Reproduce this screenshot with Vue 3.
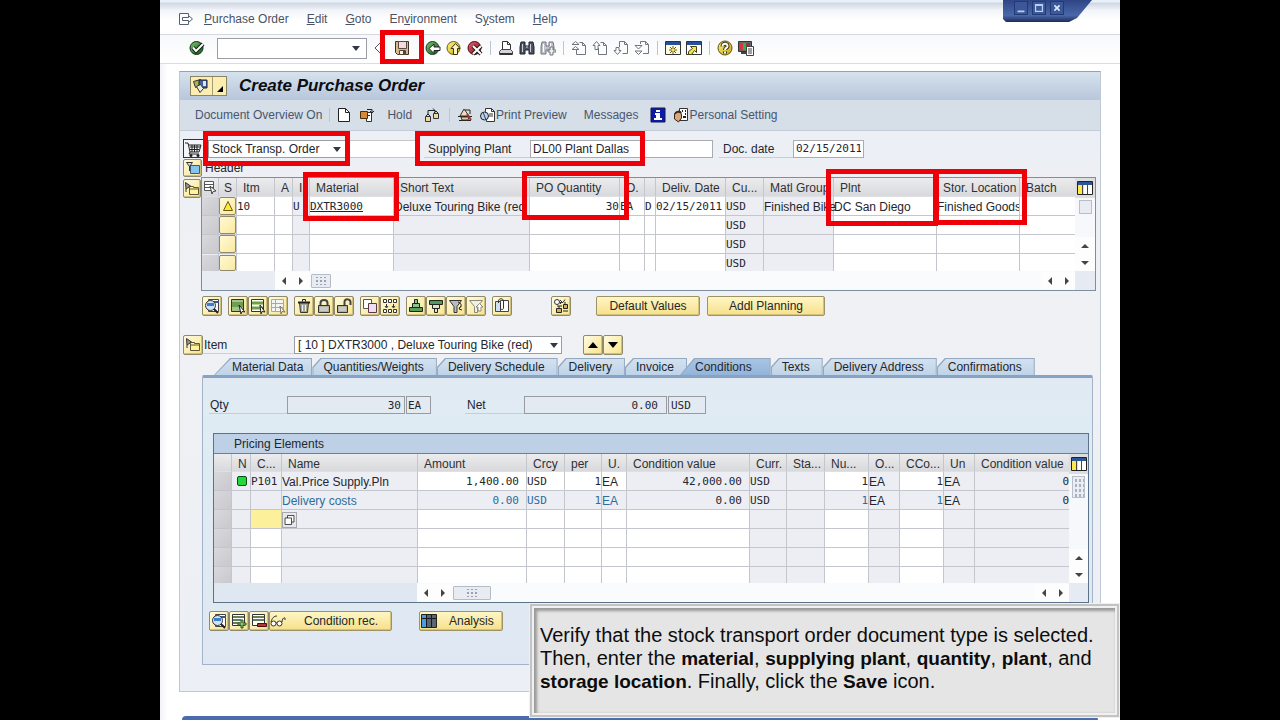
<script setup>
import { ref } from 'vue'

const menus = [
  ['', 'P', 'urchase Order'],
  ['', 'E', 'dit'],
  ['', 'G', 'oto'],
  ['En', 'v', 'ironment'],
  ['S', 'y', 'stem'],
  ['', 'H', 'elp'],
]

const toolbarGroups = [
  [['back', 'Back'], ['exit', 'Exit'], ['cancel', 'Cancel']],
  [['print', 'Print'], ['find', 'Find'], ['findnext', 'Find next']],
  [['first', 'First page'], ['prev', 'Previous page'], ['next', 'Next page'], ['last', 'Last page']],
  [['session', 'New session'], ['shortcut', 'Create shortcut']],
  [['help', 'Help'], ['layout', 'Customize layout']],
]

const itemColumns = [
  { label: '', w: 17, kind: 'sel' },
  { label: 'S', w: 18, kind: 'status' },
  { label: 'Itm', w: 38, kind: 'edit', mono: true },
  { label: 'A', w: 18, kind: 'edit' },
  { label: 'I', w: 17, kind: 'read', mono: true },
  { label: 'Material', w: 84, kind: 'edit', mono: true, link: true },
  { label: 'Short Text', w: 136, kind: 'read' },
  { label: 'PO Quantity', w: 90, kind: 'edit', mono: true, right: true },
  { label: 'O.', w: 25, kind: 'edit', mono: true },
  { label: '', w: 11, kind: 'edit', mono: true },
  { label: 'Deliv. Date', w: 70, kind: 'edit', mono: true },
  { label: 'Cu...', w: 38, kind: 'read', mono: true },
  { label: 'Matl Group', w: 70, kind: 'read' },
  { label: 'Plnt', w: 103, kind: 'edit' },
  { label: 'Stor. Location', w: 83, kind: 'edit' },
  { label: 'Batch', w: 0, kind: 'edit' },
]

const blankItem = ['', '', '', '', '', '', '', '', '', '', '', 'USD', '', '', '', '']
const itemRows = ref([
  ['', '△', '10', '', 'U', 'DXTR3000', 'Deluxe Touring Bike (red', '30', 'EA', 'D', '02/15/2011', 'USD', 'Finished Bike', 'DC San Diego', 'Finished Goods', ''],
  [...blankItem],
  [...blankItem],
  [...blankItem],
])

const itemTools = [
  [['detail', 'Details']],
  [['selall', 'Select all'], ['selblock', 'Select block'], ['desel', 'Deselect all']],
  [['trash', 'Delete'], ['lock', 'Lock'], ['unlock', 'Unlock']],
  [['copy', 'Copy'], ['rows', 'Duplicate']],
  [['sortup', 'Sort ascending'], ['sortdown', 'Sort descending'], ['filter', 'Filter'], ['unfilter', 'Remove filter']],
  [['clip', 'Attachments']],
]

const tabs = ['Material Data', 'Quantities/Weights', 'Delivery Schedule', 'Delivery', 'Invoice', 'Conditions', 'Texts', 'Delivery Address', 'Confirmations']
const activeTab = ref('Conditions')

const priceColumns = [
  { label: '', w: 18, kind: 'sel' },
  { label: 'N', w: 19, kind: 'light' },
  { label: 'C...', w: 31, kind: 'ctype', mono: true },
  { label: 'Name', w: 136, kind: 'name' },
  { label: 'Amount', w: 109, kind: 'edit', mono: true, right: true, pad: true },
  { label: 'Crcy', w: 38, kind: 'edit', mono: true },
  { label: 'per', w: 37, kind: 'edit', mono: true, right: true },
  { label: 'U.', w: 25, kind: 'edit' },
  { label: 'Condition value', w: 123, kind: 'value', mono: true, right: true, pad: true },
  { label: 'Curr.', w: 37, kind: 'read', mono: true },
  { label: 'Sta...', w: 38, kind: 'read' },
  { label: 'Nu...', w: 44, kind: 'edit', mono: true, right: true },
  { label: 'O...', w: 31, kind: 'read' },
  { label: 'CCo...', w: 44, kind: 'edit', mono: true, right: true },
  { label: 'Un', w: 31, kind: 'read' },
  { label: 'Condition value', w: 0, kind: 'read', mono: true, right: true },
]

const priceRows = ref([
  ['', 'on', 'P101', 'Val.Price Supply.Pln', '1,400.00', 'USD', '1', 'EA', '42,000.00', 'USD', '', '1', 'EA', '1', 'EA', '0'],
  ['', '', '', 'Delivery costs', '0.00', 'USD', '1', 'EA', '0.00', 'USD', '', '1', 'EA', '1', 'EA', '0'],
  Array(16).fill(''),
  Array(16).fill(''),
  Array(16).fill(''),
  Array(16).fill(''),
])

function isInput(col, rowIndex) {
  if (col.kind === 'value' || col.kind === 'ctype') return rowIndex > 1
  return col.kind === 'edit' && rowIndex !== 1
}

const colStyle = (c) => (c.w ? { width: c.w + 'px' } : {})
</script>

<template>
  <svg class="defs" aria-hidden="true">
    <defs>
      <linearGradient id="g-green" x1="0" y1="0" x2="1" y2="1"><stop offset="0" stop-color="#7cc46c" /><stop offset="1" stop-color="#14581c" /></linearGradient>
      <linearGradient id="g-yel" x1="0" y1="0" x2="1" y2="1"><stop offset="0" stop-color="#fff680" /><stop offset="1" stop-color="#c9a514" /></linearGradient>
      <linearGradient id="g-red" x1="0" y1="0" x2="1" y2="1"><stop offset="0" stop-color="#e8606c" /><stop offset="1" stop-color="#8a0a1c" /></linearGradient>
    </defs>
    <symbol id="i-menu" viewBox="0 0 16 16"><path d="M10.500 4.500V2.500H1.500v11h9v-2M4.500 6.500v3h6v2l4-3.500-4-3.500v2z" fill="#fff" stroke="#565f70" /></symbol>
    <symbol id="i-ok" viewBox="0 0 16 16"><circle cx="7.500" cy="8" r="6.500" fill="url(#g-green)" stroke="#0c3012" /><path d="M4 7.500l3 3.500 7-7" fill="none" stroke="#0c2010" stroke-width="4" /><path d="M4 7.500l3 3.500 7-7" fill="none" stroke="#fff" stroke-width="2" /></symbol>
    <symbol id="i-save" viewBox="0 0 16 16"><path d="M1.500 1.500h13v13h-11l-2-2z" fill="#d9b98c" stroke="#3c3029" /><path d="M4.500 1.500h8v7h-8z" fill="#f3dcdc" stroke="#5c4a40" /><path d="M5.500 10.500h6v4h-6z" fill="#f8f4e8" stroke="#54463b" /><path d="M9 11h2v3H9z" fill="#54463b" /></symbol>
    <symbol id="i-back" viewBox="0 0 16 16"><circle cx="7.500" cy="8" r="6.500" fill="url(#g-green)" stroke="#123d18" /><path d="M4 8.500l5-4.500v3h6v3.500H9v3z" fill="#fff" stroke="#222" /></symbol>
    <symbol id="i-exit" viewBox="0 0 16 16"><circle cx="7.500" cy="8" r="6.500" fill="url(#g-yel)" stroke="#6c5b14" /><path d="M9.500 3.500l4.500 5h-2.500v6h-4v-6H5z" fill="#fff8c0" stroke="#3a3212" /></symbol>
    <symbol id="i-cancel" viewBox="0 0 16 16"><circle cx="7.500" cy="8" r="6.500" fill="url(#g-red)" stroke="#4c0810" /><path d="M6 6l8 8M14 6l-8 8" stroke="#222" stroke-width="4" /><path d="M6 6l8 8M14 6l-8 8" stroke="#fff" stroke-width="2" /></symbol>
    <symbol id="i-print" viewBox="0 0 16 16"><path d="M4.500 9.500v-8h5l3 3v5" fill="#fff" stroke="#333" /><path d="M9.500 1.500v3h3" fill="none" stroke="#333" /><path d="M1.500 14.500v-3l2-2h9l2 2v3z" fill="#d5d5dc" stroke="#444" /><path d="M2 14h12" stroke="#333" stroke-width="2" /></symbol>
    <symbol id="i-find" viewBox="0 0 16 16"><path d="M2 2h4v4h4V2h4l1 5v7h-5v-4H6v4H1V7z" fill="#4c525e" stroke="#20242c" /><path d="M3.500 4v8M11.500 4v8M7 7h2" stroke="#c8d0e0" stroke-width="1" /></symbol>
    <symbol id="i-findnext" viewBox="0 0 16 16"><path d="M2 2h4v4h3V2h4l1 5v3H6v4H1V7z" fill="#bfc3ca" stroke="#70757e" /><path d="M3.500 4v8M10.500 3v5" stroke="#fff" /><path d="M10 7h3v3h3v2h-3v3h-3v-3H8v-2h2z" fill="#eee" stroke="#70757e" /></symbol>
    <symbol id="i-first" viewBox="0 0 16 16"><path d="M5.500 9v5.500h9v-9l-3-3h-3M11.500 2.500v3h3" fill="none" stroke="#70757e" /><path d="M1 4.500l3.500-3 3.500 3zM1 9.500l3.500-3 3.500 3z" fill="#fff" stroke="#70757e" /></symbol>
    <symbol id="i-prev" viewBox="0 0 16 16"><path d="M6.500 8v6.500h8v-9l-3-3h-3M11.500 2.500v3h3" fill="none" stroke="#70757e" /><path d="M1 5.500l3.500-4 3.500 4H6v4H3v-4z" fill="#fff" stroke="#70757e" /></symbol>
    <symbol id="i-next" viewBox="0 0 16 16"><path d="M6.500 7V1.500h5l3 3v9h-5M11.500 1.500v3h3" fill="none" stroke="#70757e" /><path d="M1 10.500l3.500 4 3.500-4H6v-3H3v3z" fill="#fff" stroke="#70757e" /></symbol>
    <symbol id="i-last" viewBox="0 0 16 16"><path d="M6.500 4V1.500h5l3 3v9H9M11.500 1.500v3h3" fill="none" stroke="#70757e" /><path d="M1 5.500h7L4.500 9zM1 11h7l-3.500 3.500z" fill="#fff" stroke="#70757e" /></symbol>
    <symbol id="i-session" viewBox="0 0 16 16"><path d="M.5 1.500h15v13H.5z" fill="#fffbe0" stroke="#333" /><path d="M1 2h14v3H1z" fill="#28509a" /><path d="M8 6v8M4 10h8M5 7l6 6M11 7l-6 6" stroke="#6b5a10" stroke-width="1" /><path d="M7 9h2v2H7z" fill="#ffe838" /></symbol>
    <symbol id="i-shortcut" viewBox="0 0 16 16"><path d="M.5 1.500h15v13H.5z" fill="#fff" stroke="#333" /><path d="M1 2h14v3H1z" fill="#28509a" /><path d="M2.500 14.500v-3l4-3-2-2h6v6l-2-2-3 4z" fill="#f4e648" stroke="#4a4310" /></symbol>
    <symbol id="i-help" viewBox="0 0 16 16"><circle cx="8" cy="8" r="7" fill="url(#g-yel)" stroke="#5e5210" /><path d="M5.500 6.500c0-4 5.500-3.500 5 0C10 8 8 8 8 10M8 11.500v2" fill="none" stroke="#3a3208" stroke-width="4" /><path d="M5.500 6.500c0-4 5.500-3.500 5 0C10 8 8 8 8 10M8 11.500v2" fill="none" stroke="#fff" stroke-width="2" /></symbol>
    <symbol id="i-layout" viewBox="0 0 16 16"><path d="M.5 1.500h13v10H.5z" fill="#666" stroke="#333" /><path d="M2 3h3v7H2z" fill="#d8323c" /><path d="M5 3h3v7H5z" fill="#36b04c" /><path d="M8 3h4v7H8z" fill="#9a3048" /><path d="M3 13h6" stroke="#444" stroke-width="2" /><path d="M8.500 6.500h7v9h-7z" fill="#fff" stroke="#444" /><path d="M10 9h4M10 11h4M10 13h4" stroke="#444" /></symbol>
    <symbol id="i-po" viewBox="0 0 16 16"><path d="M1.500 3.500l7-2 2 5-7 3z" fill="#a8b848" stroke="#333" /><path d="M7 2h8v8H7z" fill="#3c64b4" stroke="#222" /><path d="M11 3h3v5h-3z" fill="#dce6f8" /><path d="M4.500 8.500l3.500 6 3.500-4-3-4z" fill="#f3efdc" stroke="#333" /></symbol>
    <symbol id="i-doc" viewBox="0 0 16 16"><path d="M2.500 1.500h7l4 4v9h-11z" fill="#fff" stroke="#222" /><path d="M9.500 1.500v4h4" fill="none" stroke="#222" /></symbol>
    <symbol id="i-other" viewBox="0 0 16 16"><path d="M7.500 5.500h5v9h-5z" fill="#fff" stroke="#333" /><path d="M1.500 4.500h7v7h-7z" fill="#d98a34" stroke="#4c2e0c" /><path d="M8 2.500h5v3M11 4l2 2 2-2M9 8.500h2" fill="none" stroke="#222" /></symbol>
    <symbol id="i-check" viewBox="0 0 16 16"><path d="M1.500 9.500h5v5h-5zM9.500 6.500h5v5h-5z" fill="#f0d9a0" stroke="#333" /><path d="M4 8V3.500h7v2M9 1.500l2 2M2 9l2-2 2 2M10 6l2-2 2 2" fill="none" stroke="#222" /></symbol>
    <symbol id="i-balance" viewBox="0 0 16 16"><path d="M3 9l4-7 5 7z" fill="#f4d9bc" stroke="#333" /><path d="M1 9.500h14M2 13.500h12M8 3h5v4" fill="none" stroke="#222" /><path d="M4 10h8l-1 3H5z" fill="#ecc8a4" stroke="#333" /><path d="M10 7l4 6" stroke="#a43434" stroke-width="2" /></symbol>
    <symbol id="i-preview" viewBox="0 0 16 16"><path d="M5.500 4.500v-3h6l3 3v10h-8z" fill="#fff" stroke="#333" /><path d="M11.500 1.500v3h3M9 7h4M9 9h4" fill="none" stroke="#333" /><circle cx="4.500" cy="9" r="4" fill="#b8d0ee" stroke="#222" /><path d="M3 5l3 8" stroke="#345" /></symbol>
    <symbol id="i-info" viewBox="0 0 16 16"><path d="M1 1h14v14H1z" fill="#0c1ca8" stroke="#111a50" /><path d="M6 3h4v2H6zM5 6h5v5h2v2H4v-2h2V8H5z" fill="#fff" /></symbol>
    <symbol id="i-person" viewBox="0 0 16 16"><path d="M6.500 1.500h8v12h-8z" fill="#fff" stroke="#333" /><path d="M9 4h1M12 4h1M12 7h1M10 10h3" stroke="#222" stroke-width="2" /><path d="M1.500 8c0-4 7-4 7 0v3l-3 4-4-3z" fill="#d9a878" stroke="#382414" /><path d="M2 7c1-3 5-3 6-1" stroke="#3c2818" stroke-width="2" fill="none" /></symbol>
    <symbol id="i-cart" viewBox="0 0 18 16"><path d="M1 2h3l2 9h9l2-7H4.500M6 6h10M6 8.500h9M8 4v7M10.500 4v7M13 4v7" fill="none" stroke="#222" /><path d="M6 11l-1 2h10" fill="none" stroke="#222" /><circle cx="7" cy="14.500" r="1.500" fill="#222" /><circle cx="14" cy="14.500" r="1.500" fill="#222" /></symbol>
    <symbol id="i-expand" viewBox="0 0 16 16"><path d="M5.500 5.500h9v8h-9z" fill="#84c4ee" stroke="#34607c" /><path d="M1.500 2.500h6l-3 4zM4.500 6v5" fill="#ddd" stroke="#333" /></symbol>
    <symbol id="i-folder" viewBox="0 0 16 16"><path d="M5.500 6.500v-1h4v1h5v7h-9z" fill="#fff2a0" stroke="#5f5832" /><path d="M5 8h9" stroke="#5f5832" /><path d="M1.500 1.500l5 3.500-4.500 3zM2 8v3" fill="#999" stroke="#333" /></symbol>
    <symbol id="i-selcol" viewBox="0 0 16 16"><path d="M2.500 2.500h9v9h-9zM2.500 5.500h9M2.500 8.500h9" fill="#fff" stroke="#555" /><path d="M8 7l6 5-3 .500-1 2.500z" fill="#fff" stroke="#444" /></symbol>
    <symbol id="i-config" viewBox="0 0 16 16"><path d="M.5 1.500h15v13H.5z" fill="#fff" stroke="#222" /><path d="M1 2h14v3H1z" fill="#2c5694" /><path d="M1 5h6v9H1z" fill="#ffe84c" /><path d="M5.500 5v9M10.500 5v9" stroke="#444" /></symbol>
    <symbol id="i-detail" viewBox="0 0 16 16"><path d="M4.500 1.500h10v12h-10z" fill="#fff" stroke="#444" /><path d="M5 4h10" stroke="#335a96" stroke-width="2" /><circle cx="6.500" cy="7.500" r="5" fill="#cfe4f8" stroke="#333" /><path d="M3 5h7v3H3z" fill="#3c7fd0" /><path d="M10 11l4 4" stroke="#222" stroke-width="2" /></symbol>
    <symbol id="i-selall" viewBox="0 0 16 16"><path d="M1.500 1.500h12v12h-12z" fill="#6f9e50" stroke="#333" /><path d="M2 3h11M2 10h11M2 12h11" stroke="#dce8cc" /><path d="M9 7l6 7-3-.500L11 16z" fill="#fff" stroke="#222" /></symbol>
    <symbol id="i-selblock" viewBox="0 0 16 16"><path d="M1.500 1.500h12v12h-12z" fill="#fff" stroke="#333" /><path d="M2 5h11M2 10h11" stroke="#6fa044" stroke-width="3" /><path d="M10 7l5 7-3-.500L11 16z" fill="#fff" stroke="#222" /></symbol>
    <symbol id="i-desel" viewBox="0 0 16 16"><path d="M1.500 1.500h12v12h-12zM2 5.500h11M2 9.500h11M5.500 2v11" fill="#f4f4f0" stroke="#aaa99a" /><path d="M10 8l5 6-3-.500L11 16z" fill="#fff" stroke="#77766c" /></symbol>
    <symbol id="i-trash" viewBox="0 0 16 16"><path d="M3.500 4.500h9l-1 10h-7z" fill="#a8a898" stroke="#333" /><path d="M2 4.500h12" stroke="#222" stroke-width="2" /><path d="M6.500 3.500v-2h3v2" fill="none" stroke="#222" /><path d="M6.500 7v6M9.500 7v6" stroke="#eee" /></symbol>
    <symbol id="i-lock" viewBox="0 0 16 16"><path d="M4.500 8V5c0-4 7-4 7 0v3" fill="none" stroke="#444" stroke-width="2" /><path d="M2.500 7.500h11v7h-11z" fill="#b0b0a4" stroke="#333" /><path d="M4 10h8M4 12h8" stroke="#e4e4dc" /></symbol>
    <symbol id="i-unlock" viewBox="0 0 16 16"><path d="M8.500 8V4c0-4 6-3 6 0v3" fill="none" stroke="#444" stroke-width="2" /><path d="M1.500 7.500h10v7h-10z" fill="#b0b0a4" stroke="#333" /><path d="M3 10h7M3 12h7" stroke="#e4e4dc" /></symbol>
    <symbol id="i-copy" viewBox="0 0 16 16"><path d="M1.500 1.500h8v9h-8z" fill="#fff" stroke="#555" /><path d="M6.500 5.500h8v9h-8z" fill="#eedff0" stroke="#5c3448" /></symbol>
    <symbol id="i-rows" viewBox="0 0 16 16"><path d="M1.500 1.500h3v3h-3zM6.500 1.500h3v3h-3zM11.500 1.500h3v3h-3zM1.500 11.500h3v3h-3zM6.500 11.500h3v3h-3zM11.500 11.500h3v3h-3z" fill="#fff" stroke="#333" /><path d="M4.500 6v3M3 8l1.500 2L6 8M11.500 6v3M10 8l1.500 2L13 8" fill="none" stroke="#333" /></symbol>
    <symbol id="i-sortup" viewBox="0 0 16 16"><path d="M6.500 1.500h3v4h-3zM4.500 5.500h7v4h-7z" fill="#8cc48c" stroke="#222" /><path d="M1.500 9.500h13v4h-13z" fill="#5c9c5c" stroke="#222" /></symbol>
    <symbol id="i-sortdown" viewBox="0 0 16 16"><path d="M1.500 2.500h13v4h-13z" fill="#4c9c54" stroke="#222" /><path d="M4.500 6.500h7v4h-7zM6.500 10.500h3v4h-3z" fill="#d8e8c8" stroke="#222" /></symbol>
    <symbol id="i-filter" viewBox="0 0 16 16"><path d="M1.500 2.500h12l-4.500 6v6h-3v-6z" fill="#b8bcc0" stroke="#333" /><path d="M10 4c4 1 4 5 1 6M13 8l-2 3 3 1" fill="none" stroke="#222" /></symbol>
    <symbol id="i-unfilter" viewBox="0 0 16 16"><path d="M1.500 2.500h13l-5 6v6h-3v-6z" fill="#f2f0e0" stroke="#8c8a7a" /><path d="M10 13V9H8l3.500-3.500L15 9h-2v4z" fill="#fff" stroke="#8c8a7a" /></symbol>
    <symbol id="i-clip" viewBox="0 0 16 16"><path d="M1.500 3.500h6v10h-6z" fill="#cfe0f4" stroke="#445" /><path d="M6.500 2.500h8v11h-8z" fill="#fff" stroke="#444" /><path d="M4.500 5V3c0-3 5-3 5 0v7c0 2-3 2-3 0V5" fill="none" stroke="#333" /></symbol>
    <symbol id="i-tree" viewBox="0 0 16 16"><circle cx="4" cy="4" r="2.500" fill="#fff" stroke="#333" /><path d="M7 4.500h3l2-3M7 2l2 2-2 2" fill="none" stroke="#333" /><path d="M3.500 10.500h5v4h-5zM10.500 6.500h4v4h-4z" fill="#d8b048" stroke="#222" /><path d="M4 8h5M6 8v2M12 4v2M10 13h5" stroke="#222" /></symbol>
    <symbol id="i-addrow" viewBox="0 0 16 16"><path d="M1.500 1.500h12v11h-12z" fill="#fff" stroke="#333" /><path d="M2 4h11M2 7h8M2 10h7" stroke="#66805c" stroke-width="2" /><path d="M10 7h2v3h3v2h-3v3h-2v-3H7v-2h3z" fill="#8cc870" stroke="#2c5424" /></symbol>
    <symbol id="i-delrow" viewBox="0 0 16 16"><path d="M1.500 1.500h12v11h-12z" fill="#fff" stroke="#333" /><path d="M2 4h11M2 7h11" stroke="#66805c" stroke-width="2" /><path d="M6.500 10.500h9v3h-9z" fill="#b83434" stroke="#4c1010" /></symbol>
    <symbol id="i-glasses" viewBox="0 0 16 16"><circle cx="3.500" cy="10.500" r="2.500" fill="#fff" stroke="#333" /><circle cx="9.500" cy="10.500" r="2.500" fill="#fff" stroke="#333" /><path d="M1 9c1-4 3-6 6-6M12 9c0-3 2-5 3-4v2M6 10h1" fill="none" stroke="#333" /></symbol>
    <symbol id="i-analysis" viewBox="0 0 16 16"><path d="M.5 1.500h15v13H.5z" fill="#5c6670" stroke="#222" /><path d="M1 2h4v12H1z" fill="#4c9ce0" /><path d="M5.500 2v12M10.500 2v12M1 5.500h14" stroke="#151a20" stroke-width="1" /></symbol>
    <symbol id="i-match" viewBox="0 0 16 16"><path d="M5.500 2.500h8v8h-8z" fill="#fff" stroke="#222" /><path d="M2.500 5.500h8v8h-8z" fill="#fff" stroke="#222" /></symbol>
  </svg>

  <div class="stage">
    <main class="window">
      <div class="caption">
        <button aria-label="Minimize"><svg viewBox="0 0 14 14"><path d="M3 11h8" stroke="#b8cff4" stroke-width="2" /></svg></button>
        <button aria-label="Maximize"><svg viewBox="0 0 14 14"><path d="M3 3h8v8H3zM3 4h8" fill="none" stroke="#b8cff4" stroke-width="1.500" /></svg></button>
        <button aria-label="Close"><svg viewBox="0 0 14 14"><path d="M4 4l6 6M10 4l-6 6" stroke="#dce8fc" stroke-width="2" /></svg></button>
      </div>

      <nav class="menubar">
        <svg class="ico"><use href="#i-menu" /></svg>
        <button v-for="m in menus" :key="m[2]">{{ m[0] }}<u>{{ m[1] }}</u>{{ m[2] }}</button>
      </nav>

      <div class="toolbar">
        <button class="flat" aria-label="Enter"><svg class="ico"><use href="#i-ok" /></svg></button>
        <div class="drop command"><select aria-label="Command field"><option></option></select></div>
        <button class="flat chevron" aria-label="Hide command field"><svg viewBox="0 0 8 16"><path d="M7 3L2 8l5 5" fill="#fff" stroke="#555" /></svg></button>
        <button class="flat save" aria-label="Save"><svg class="ico"><use href="#i-save" /></svg></button>
        <template v-for="(g, gi) in toolbarGroups" :key="gi">
          <i v-if="gi" class="sep"></i>
          <button v-for="b in g" :key="b[0]" class="flat" :aria-label="b[1]"><svg class="ico"><use :href="'#i-' + b[0]" /></svg></button>
        </template>
      </div>

      <section class="screen">
        <header class="titlebar">
          <button class="objmenu" aria-label="Object services"><svg class="ico"><use href="#i-po" /></svg><i></i><svg class="tick" viewBox="0 0 6 6"><path d="M6 0v6H0z" /></svg></button>
          <h1>Create Purchase Order</h1>
        </header>

        <div class="appbar">
          <button class="flat">Document Overview On</button>
          <i class="sep wide"></i>
          <button class="flat" aria-label="Create"><svg class="ico"><use href="#i-doc" /></svg></button>
          <button class="flat gap-s" aria-label="Other purchase order"><svg class="ico"><use href="#i-other" /></svg></button>
          <button class="flat gap-m">Hold</button>
          <button class="flat gap-m" aria-label="Check"><svg class="ico"><use href="#i-check" /></svg></button>
          <i class="sep"></i>
          <button class="flat" aria-label="Balance"><svg class="ico"><use href="#i-balance" /></svg></button>
          <button class="flat gap-s"><svg class="ico"><use href="#i-preview" /></svg>Print Preview</button>
          <button class="flat gap-l">Messages</button>
          <button class="flat gap-m" aria-label="Information"><svg class="ico"><use href="#i-info" /></svg></button>
          <button class="flat gap-s"><svg class="ico"><use href="#i-person" /></svg>Personal Setting</button>
        </div>

        <div class="body">
          <div class="docrow">
            <button class="cart" aria-label="Shopping cart"><svg viewBox="0 0 18 16"><use href="#i-cart" /></svg></button>
            <div class="drop doctype"><select aria-label="Document type"><option>Stock Transp. Order</option></select></div>
            <input class="docno" aria-label="Purchase order number">
            <label class="lbl supply" for="plant">Supplying Plant</label>
            <input id="plant" class="plant" value="DL00 Plant Dallas">
            <label class="lbl datelbl" for="docdate">Doc. date</label>
            <input id="docdate" class="date mono" value="02/15/2011">
          </div>
          <div class="headrow">
            <button class="key" aria-label="Expand header"><svg class="ico"><use href="#i-expand" /></svg></button><span>Header</span>
          </div>

          <div class="items">
            <button class="key" aria-label="Expand items"><svg class="ico"><use href="#i-folder" /></svg></button>
            <div class="sheet">
              <table>
                <colgroup><col v-for="(c, i) in itemColumns" :key="i" :style="colStyle(c)"></colgroup>
                <thead><tr><th v-for="(c, i) in itemColumns" :key="i" :class="c.kind"><svg v-if="!i" class="ico"><use href="#i-selcol" /></svg>{{ c.label }}</th></tr></thead>
                <tbody>
                  <tr v-for="(r, ri) in itemRows" :key="ri">
                    <td v-for="(c, ci) in itemColumns" :key="ci" :class="[c.kind, { mono: c.mono, right: c.right, link: c.link }]">
                      <button v-if="c.kind === 'sel'" class="rowsel" :aria-label="'Select item ' + (ri + 1)"></button>
                      <button v-else-if="c.kind === 'status'" class="stat" :aria-label="'Status of item ' + (ri + 1)"><svg v-if="r[ci]" viewBox="0 0 12 12"><path d="M6 1.500l4.500 9h-9z" fill="#ffe83c" stroke="#6b5c14" /></svg></button>
                      <input v-else-if="c.kind === 'edit'" v-model="r[ci]" :aria-label="(c.label || 'Category') + ' ' + (ri + 1)">
                      <template v-else>{{ r[ci] }}</template>
                    </td>
                  </tr>
                </tbody>
              </table>
              <div class="vbar">
                <button class="cfg" aria-label="Table settings"><svg class="ico"><use href="#i-config" /></svg></button>
                <i class="vthumb small"></i>
                <button aria-label="Scroll up"><svg viewBox="0 0 8 4"><path d="M0 4l4-4 4 4z" /></svg></button>
                <button aria-label="Scroll down"><svg viewBox="0 0 8 4"><path d="M0 0h8L4 4z" /></svg></button>
              </div>
              <div class="hbar hitems">
                <button aria-label="Scroll left"><svg viewBox="0 0 4 8"><path d="M4 0v8L0 4z" /></svg></button>
                <button aria-label="Scroll right"><svg viewBox="0 0 4 8"><path d="M0 0v8l4-4z" /></svg></button>
                <i class="hthumb"></i>
                <button class="push" aria-label="Page left"><svg viewBox="0 0 4 8"><path d="M4 0v8L0 4z" /></svg></button>
                <button aria-label="Page right"><svg viewBox="0 0 4 8"><path d="M0 0v8l4-4z" /></svg></button>
              </div>
            </div>
          </div>

          <div class="itemtools">
            <div v-for="(g, gi) in itemTools" :key="gi" class="grp">
              <button v-for="b in g" :key="b[0]" class="key" :aria-label="b[1]"><svg class="ico"><use :href="'#i-' + b[0]" /></svg></button>
            </div>
            <button class="key tree" aria-label="Configuration"><svg class="ico"><use href="#i-tree" /></svg></button>
            <button class="push-btn defaults">Default Values</button>
            <button class="push-btn planning">Addl Planning</button>
          </div>

          <div class="itemrow">
            <button class="key" aria-label="Collapse item details"><svg class="ico"><use href="#i-folder" /></svg></button>
            <label for="itemsel">Item</label>
            <div class="drop itemsel"><select id="itemsel"><option>[ 10 ] DXTR3000 , Deluxe Touring Bike (red)</option></select></div>
            <button class="key" aria-label="Previous item"><svg class="arrow" viewBox="0 0 10 6"><path d="M0 6l5-6 5 6z" /></svg></button>
            <button class="key" aria-label="Next item"><svg class="arrow" viewBox="0 0 10 6"><path d="M0 0h10L5 6z" /></svg></button>
          </div>

          <div class="tabs" role="tablist">
            <button v-for="t in tabs" :key="t" role="tab" :aria-selected="t === activeTab" :class="{ active: t === activeTab }" @click="activeTab = t"><span>{{ t }}</span></button>
          </div>

          <div class="tabpane">
            <div class="totals">
              <label class="lbl qtylbl" for="qty">Qty</label>
              <input id="qty" class="mono qty" value="30" readonly>
              <input class="mono unit" value="EA" readonly aria-label="Unit">
              <label class="lbl netlbl" for="net">Net</label>
              <input id="net" class="mono net" value="0.00" readonly>
              <input class="mono cur" value="USD" readonly aria-label="Currency">
            </div>

            <div class="pricing">
              <h2>Pricing Elements</h2>
              <div class="sheet">
                <table>
                  <colgroup><col v-for="(c, i) in priceColumns" :key="i" :style="colStyle(c)"></colgroup>
                  <thead><tr><th v-for="(c, i) in priceColumns" :key="i" :class="c.kind">{{ c.label }}</th></tr></thead>
                  <tbody>
                    <tr v-for="(r, ri) in priceRows" :key="ri" :class="{ costs: ri === 1 }">
                      <td v-for="(c, ci) in priceColumns" :key="ci" :class="[c.kind, { mono: c.mono, right: c.right, pad: c.pad, open: isInput(c, ri), current: c.kind === 'ctype' && ri === 2, blue: ri === 1 && (c.kind === 'edit' || c.kind === 'name') }]">
                        <button v-if="c.kind === 'sel'" class="rowsel" :aria-label="'Select condition ' + (ri + 1)"></button>
                        <i v-else-if="r[ci] === 'on'" class="led"></i>
                        <input v-else-if="isInput(c, ri)" v-model="r[ci]" :aria-label="c.label + ' ' + (ri + 1)">
                        <button v-else-if="c.kind === 'name' && ri === 2" class="match" aria-label="Choose condition type"><svg class="ico"><use href="#i-match" /></svg></button>
                        <template v-else>{{ r[ci] }}</template>
                      </td>
                    </tr>
                  </tbody>
                </table>
                <div class="vbar">
                  <button class="cfg" aria-label="Table settings"><svg class="ico"><use href="#i-config" /></svg></button>
                  <i class="vthumb"></i>
                  <button aria-label="Scroll up"><svg viewBox="0 0 8 4"><path d="M0 4l4-4 4 4z" /></svg></button>
                  <button aria-label="Scroll down"><svg viewBox="0 0 8 4"><path d="M0 0h8L4 4z" /></svg></button>
                </div>
                <div class="hbar hprice">
                  <button aria-label="Scroll left"><svg viewBox="0 0 4 8"><path d="M4 0v8L0 4z" /></svg></button>
                  <button aria-label="Scroll right"><svg viewBox="0 0 4 8"><path d="M0 0v8l4-4z" /></svg></button>
                  <i class="hthumb long"></i>
                  <button class="push" aria-label="Page left"><svg viewBox="0 0 4 8"><path d="M4 0v8L0 4z" /></svg></button>
                  <button aria-label="Page right"><svg viewBox="0 0 4 8"><path d="M0 0v8l4-4z" /></svg></button>
                </div>
              </div>
            </div>

            <div class="pricetools">
              <button class="key" aria-label="Condition details"><svg class="ico"><use href="#i-detail" /></svg></button>
              <button class="key" aria-label="Insert row"><svg class="ico"><use href="#i-addrow" /></svg></button>
              <button class="key" aria-label="Delete row"><svg class="ico"><use href="#i-delrow" /></svg></button>
              <button class="push-btn rec"><svg class="ico"><use href="#i-glasses" /></svg><span>Condition rec.</span></button>
              <button class="push-btn analysis"><svg class="ico"><use href="#i-analysis" /></svg><span>Analysis</span></button>
            </div>
          </div>
        </div>
      </section>

      <footer class="statusline"></footer>

      <div class="mark m-save"></div>
      <div class="mark m-type"></div>
      <div class="mark m-supply"></div>
      <div class="mark m-material"></div>
      <div class="mark m-qty"></div>
      <div class="mark m-plant"></div>
      <div class="mark m-stor"></div>

      <aside class="callout">
        <p>Verify that the stock transport order document type is selected.<br>Then, enter the <b>material</b>, <b>supplying plant</b>, <b>quantity</b>, <b>plant</b>, and<br><b>storage location</b>. Finally, click the <b>Save</b> icon.</p>
      </aside>
    </main>
  </div>
</template>

<style>
body { background: #000; }
</style>

<style scoped>
* { box-sizing: border-box; }
button, input, select { font: inherit; color: inherit; margin: 0; padding: 0; border: 0; background: none; border-radius: 0; outline: 0; min-width: 0; }
.defs { position: absolute; width: 0; height: 0; }
.stage { min-height: 100vh; background: #000; display: grid; grid-template-columns: 1fr 6fr 1fr; font: 12px/16px "Liberation Sans", Arial, sans-serif; color: #23262e; overflow: hidden; }
.window { grid-column: 2; position: relative; display: flex; flex-direction: column; background: linear-gradient(90deg, #f1f3f6, #fff 8px, #fff); }
.ico { width: 16px; height: 16px; display: block; flex: none; }
.mono, .mono input { font-family: "DejaVu Sans Mono", "Liberation Mono", monospace; font-size: 11px; }
th.mono { font: inherit; }

.caption { position: absolute; top: 0; right: 28px; width: 89px; height: 22px; display: flex; gap: 4px; padding: 1px 0 0 11px; background: linear-gradient(#2f4585, #4a68a8 70%, #1c2a58); clip-path: polygon(0 0, 100% 0, 74px 18px, 66px 22px, 3px 22px, 0 19px); }
.caption button { width: 14px; height: 14px; border: 1px solid #223a78; background: #3c5898; }
.caption svg { display: block; width: 12px; height: 12px; }

.menubar { height: 35px; display: flex; align-items: center; gap: 18px; padding: 4px 0 0 18px; border-bottom: 1px solid #d5d8de; color: #4a5264; background: linear-gradient(#e8f1f9 2px, #cfd6e2 3px, #f1f4f8 10px, #fff 20px); }
.menubar .ico { margin-right: -8px; }
.toolbar { height: 29px; display: flex; align-items: center; gap: 5px; padding: 0 0 2px 29px; border-bottom: 1px solid #d9dde2; background: linear-gradient(#f7f8fa, #fff); }
.flat { display: flex; align-items: center; white-space: nowrap; }
.sep { width: 1px; height: 14px; margin: 0 2px; background: #bcc6d4; }
.drop { position: relative; background: #fff; border: 1px solid #9a9da3; }
.drop select { display: block; width: 100%; height: 100%; appearance: none; padding: 0 4px; }
.drop::after { content: ""; position: absolute; right: 6px; top: 50%; margin-top: -2px; border: 4px solid transparent; border-top: 5px solid #32384a; border-bottom: 0; pointer-events: none; }
.command { width: 150px; height: 21px; margin-left: 7px; }
.chevron { width: 8px; margin-left: 1px; }
.chevron svg { width: 8px; height: 16px; }
.save { margin: 0 10px 0 8px; }

.screen { margin: 7px 19px 0; border: 1px solid #bfc9d6; border-top-color: #93a4b8; background: #eceff5; }
.titlebar { height: 28px; display: flex; align-items: center; gap: 12px; padding-left: 10px; background: linear-gradient(#d6e2ec, #b7c6dc); }
.objmenu { width: 37px; height: 20px; display: flex; align-items: center; justify-content: space-between; padding: 0 3px 0 1px; background: #fbeeb0; border: 1px solid #8c8562; }
.objmenu i { width: 1px; height: 100%; background: #a49c74; }
.tick { width: 6px; height: 6px; margin-top: 5px; }
h1 { margin: 0; font: italic bold 17px/20px "Liberation Sans", Arial, sans-serif; color: #0c0e14; }
.appbar { height: 31px; display: flex; align-items: center; padding-left: 15px; background: #d6dee8; border-bottom: 1px solid #c3ccd8; color: #48566c; }
.appbar .sep { margin: 0 7px 0 9px; }
.appbar .wide { margin: 0 6px 0 7px; }
.gap-s { margin-left: 7px; }
.gap-m { margin-left: 12px; }
.gap-l { margin-left: 17px; }

.body { padding-bottom: 26px; background: linear-gradient(#eceff5, #f0f1f4 30%, #eceff5); }
.docrow { display: flex; align-items: center; padding: 7px 0 0 3px; height: 28px; }
.docrow input { height: 18px; padding: 0 2px; background: #fff; border: 1px solid #a9acb0; }
.cart { width: 21px; height: 19px; margin-right: 4px; border: 1px solid #333; background: #f4f5f8; }
.cart svg { display: block; width: 18px; height: 16px; }
.doctype { width: 139px; height: 18px; }
.doctype::after { right: 5px; }
.doctype select, .itemsel select { padding: 0 3px; }
.docrow .docno { width: 69px; border-width: 1px 0; border-color: #c4c6ca; }
.lbl { height: 18px; line-height: 18px; padding-left: 4px; border-bottom: 1px solid #c8ccd4; white-space: nowrap; }
.supply { width: 106px; margin-left: 8px; }
.docrow .plant { width: 183px; }
.datelbl { width: 74px; margin-left: 6px; }
.docrow .date { width: 71px; }
.headrow { height: 18px; display: flex; align-items: center; gap: 3px; padding-left: 3px; }
.key { width: 20px; height: 20px; flex: none; display: grid; place-items: center; border: 1px solid #8f8a6c; border-radius: 2px; background: linear-gradient(135deg, #fffbe0, #f8e48c); box-shadow: inset -1px -1px #cfc07c; }
.headrow .key { width: 19px; height: 18px; }

.items { display: grid; grid-template-columns: 18px 1fr; margin: 0 4px 0 3px; align-items: start; }
.items > .key { width: 18px; height: 19px; margin-top: 2px; }
.items .sheet { border: 1px solid #7c8ea0; }
.sheet { display: grid; grid-template-columns: 1fr 20px; background: #e6ebf3; min-width: 0; }
.pricing .sheet { grid-template-columns: 1fr 19px; }
table { width: 100%; table-layout: fixed; border-collapse: separate; border-spacing: 0; }
th, td { padding: 2px 0 0; height: 19px; overflow: hidden; white-space: nowrap; font-weight: normal; text-align: left; border-right: 1px solid #c3c6cc; border-bottom: 1px solid #c3c6cc; line-height: 14px; }
th { padding-left: 6px; background: linear-gradient(#ececee, #d8d9dc); border-bottom-color: #dfe0e3; color: #2d3036; }
th.status { padding-left: 5px; }
th.sel, td.sel, td.status, td.light { padding: 0; }
td { background: #eceef3; }
td.edit { background: #fff; }
td.read { overflow: visible; }
.costs td.edit { background: #eceef3; }
tbody tr:last-child td { height: 17px; border-bottom: 0; }
.pricing th { height: 18px; }
.pricing tbody tr:last-child td { height: 16px; }
.items th:last-child, .items td:last-child, .pricing th:last-child, .pricing td:last-child { border-right: 0; }
td input { display: block; width: 100%; height: 14px; line-height: 14px; text-align: inherit; }
td.right { text-align: right; }
td.pad { padding-right: 7px; }
.link input { text-decoration: underline; }
.rowsel { display: block; width: 100%; height: 18px; background: linear-gradient(135deg, #d9d9dd, #c8c8cd); }
.stat { display: grid; place-items: center; width: 17px; height: 18px; border: 1px solid #8f8a6c; border-radius: 2px; background: linear-gradient(135deg, #fffad8, #fae99c); }
.stat svg { width: 12px; height: 12px; }
tbody tr:last-child .stat, tbody tr:last-child .rowsel { height: 16px; }
td.open { background: #fff; }
td.current { background: #fdf09a; }
td.name { padding-top: 1px; }
.blue { color: #2c6c9c; }
.led { display: block; width: 10px; height: 10px; margin-left: 5px; background: #22d83c; border: 1px solid #0a4c14; border-radius: 2px; }
.match { display: block; width: 15px; height: 16px; background: #e6e8ec; border: 1px solid #a4a8b0; }
.match svg { width: 13px; height: 14px; }

.vbar { display: flex; flex-direction: column; align-items: center; background: #f7f8fb; }
.vbar button, .hbar button { display: grid; place-items: center; background: #fdfdfe; }
.vbar button { width: 100%; height: 17px; }
.vbar .cfg { height: 20px; background: #dcdde0; }
.vthumb { width: 13px; height: 22px; margin: 2px 0 auto; border: 1px solid #b9bfca; background: radial-gradient(#aab2c0 1px, transparent 1px) 1px 1px / 4px 5px, #eaedf3; }
.vthumb.small { height: 14px; background: #e8ebf1; }
.vbar button svg:not(.ico) { width: 8px; height: 4px; fill: #444; }
.hbar { display: flex; align-items: center; height: 19px; background: #fafbfd; }
.hbar button { width: 17px; height: 17px; }
.hbar svg { width: 4px; height: 8px; fill: #444; }
.hitems { border-left: 73px solid #e9edf3; }
.hprice { border-left: 203px solid #dfe7f1; }
.hthumb { width: 20px; height: 14px; margin-left: 2px; padding: 2px 3px; border: 1px solid #b4bcc8; border-radius: 1px; background: radial-gradient(#98a2b2 1px, transparent 1px) center / 4px 4px content-box, #e8ecf2; }
.hthumb.long { width: 38px; padding: 2px 12px; }
.push { margin-left: auto; }

.itemtools { display: flex; padding: 5px 0 0 22px; }
.grp { display: flex; margin-right: 6px; }
.tree { margin-left: 33px; }
.push-btn { height: 20px; display: flex; align-items: center; justify-content: center; border: 1px solid #9c9468; border-radius: 2px; background: linear-gradient(#fff6c4, #f6e08a); box-shadow: inset -1px -1px #d4c27a; }
.defaults { width: 104px; margin-left: 25px; }
.planning { width: 118px; margin-left: 7px; }

.itemrow { display: flex; align-items: center; padding: 19px 0 0 3px; }
.itemrow label { width: 91px; height: 18px; line-height: 18px; padding-left: 1px; border-bottom: 1px solid #ccd0d8; }
.itemsel { width: 268px; height: 18px; margin-right: 21px; }
.itemsel::after { right: 3px; }
.arrow { width: 10px; height: 6px; }

.tabs { display: flex; margin: 3px 7px 0 22px; padding-left: 12px; height: 17px; }
.tabs button { position: relative; height: 17px; padding: 0 13px 0 11px; background: #93a9c2; clip-path: polygon(0 100%, 0 9px, 8px 0, 100% 0, 100% 100%); white-space: nowrap; }
.tabs button::before { content: ""; position: absolute; inset: 1px 1px 0; background: linear-gradient(#d3e1ef, #bfd3e8); clip-path: polygon(0 100%, 0 9px, 8px 0, 100% 0, 100% 100%); }
.tabs button:first-child { padding: 0 9px 0 18px; clip-path: polygon(0 100%, 16px 0, 100% 0, 100% 100%); }
.tabs button:first-child::before { clip-path: polygon(0 100%, 16px 0, 100% 0, 100% 100%); }
.tabs span { position: relative; }
.tabs .active { margin-left: -7px; padding: 0 19px 0 15px; clip-path: polygon(0 100%, 14px 0, 100% 0, 100% 100%); }
.tabs .active::before { background: linear-gradient(#a8c4e4, #93b4da); clip-path: polygon(0 100%, 14px 0, 100% 0, 100% 100%); }
.tabpane { margin: 0 7px 0 22px; padding: 18px 3px 33px 0; border: 1px solid #a3b4c8; border-top: 3px solid #86a3c4; border-radius: 2px 2px 0 0; background: linear-gradient(#e1eaf3, #dfecf4 60px, #dfe8f2); }
.totals { display: flex; padding-left: 6px; }
.totals input { height: 18px; padding: 0 3px; border: 1px solid #989ca2; background: #e3eaf2; }
.qtylbl { width: 78px; padding-left: 1px; }
.totals .qty { width: 118px; text-align: right; }
.totals .unit { width: 25px; margin-left: 1px; padding: 0 1px; }
.netlbl { width: 59px; margin-left: 34px; padding-left: 2px; }
.totals .net { width: 143px; text-align: right; padding-right: 8px; }
.totals .cur { width: 38px; margin-left: 1px; padding: 0 2px; }
.pricing { margin: 19px 0 0 10px; border: 1px solid #5c7288; }
h2 { margin: 0; height: 20px; padding-left: 20px; font: 12px/20px "Liberation Sans", Arial, sans-serif; border-bottom: 1px solid #6b8096; background: #bdd0e6; }
.pricetools { display: flex; margin: 8px 0 0 6px; }
.rec { width: 123px; justify-content: flex-start; }
.rec span { margin-left: 18px; }
.analysis { width: 84px; margin-left: 27px; justify-content: flex-start; padding-left: 1px; }
.analysis span { margin-left: 12px; }

.statusline { height: 4px; margin: auto 22px 0; border-radius: 10px 10px 0 0; background: #4a6cac; }

.mark { position: absolute; border: 5px solid #ee0008; pointer-events: none; }
.m-save { left: 220px; top: 30px; width: 44px; height: 34px; }
.m-type { left: 43px; top: 131px; width: 147px; height: 35px; }
.m-supply { left: 255px; top: 131px; width: 230px; height: 35px; }
.m-material { left: 143px; top: 172px; width: 96px; height: 49px; }
.m-qty { left: 362px; top: 171px; width: 107px; height: 49px; }
.m-plant { left: 666px; top: 169px; width: 112px; height: 57px; }
.m-stor { left: 774px; top: 169px; width: 93px; height: 56px; }

.callout { position: absolute; right: 1px; bottom: 3px; width: 589px; height: 113px; padding: 18px 8px 0; border: 2px solid #c3c3c3; outline: 1px solid #f0f0f0; background: #e5e5e5; box-shadow: inset 0 0 0 2px #f0f0f0, inset 2px 2px 3px 3px #9a9a9a; color: #0c0c0c; }
.callout p { margin: 0; font-size: 20px; line-height: 23px; white-space: nowrap; }
.callout b { font-size: 19px; }
</style>
